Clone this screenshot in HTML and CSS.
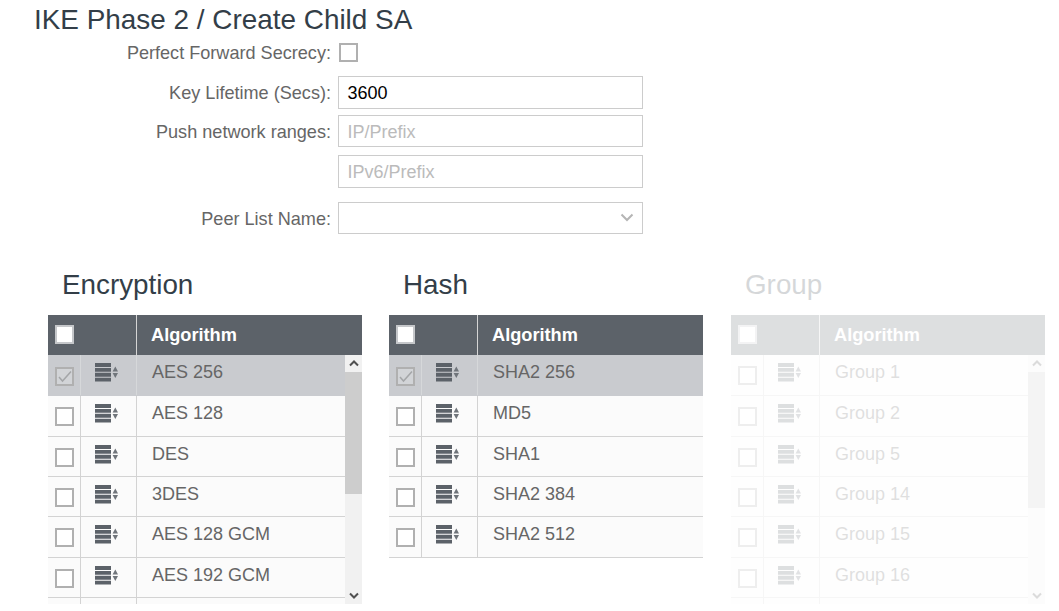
FILE: index.html
```html
<!DOCTYPE html>
<html lang="en">
<head>
    <meta charset="UTF-8">
    <title>IKE Phase 2 / Create Child SA</title>
    <link rel="stylesheet" href="styles.css">
</head>
<body>
    <svg class="defs" width="0" height="0">
        <symbol id="reorder" viewBox="0 0 23 20">
            <path d="M0 0h16v3.900H0zM0 4.900h16v3.900H0zM0 9.800h16v3.900H0zM0 14.700h16v3.900H0z" fill="#5c6269"/>
            <path d="M20.300 3.500l2.700 5h-5.400zM20.300 15l2.700-5h-5.400z" fill="#70757b"/>
        </symbol>
    </svg>

    <h1 class="page-title">IKE Phase 2 / Create Child SA</h1>

    <div class="form">
        <div class="form-row row-pfs">
            <label class="form-label">Perfect Forward Secrecy:</label>
            <span class="check check-form"></span>
        </div>
        <div class="form-row row-lifetime">
            <label class="form-label">Key Lifetime (Secs):</label>
            <div class="field field-value">3600</div>
        </div>
        <div class="form-row row-push">
            <label class="form-label">Push network ranges:</label>
            <div class="field field-empty">IP/Prefix</div>
        </div>
        <div class="form-row row-push6">
            <label class="form-label"></label>
            <div class="field field-empty">IPv6/Prefix</div>
        </div>
        <div class="form-row row-peer">
            <label class="form-label">Peer List Name:</label>
            <div class="field field-select">
                <svg class="caret" width="14" height="9" viewBox="0 0 14 9"><path d="M1.500 1.500L7 7l5.500-5.500" fill="none" stroke="#b5b5b5" stroke-width="2"/></svg>
            </div>
        </div>
    </div>

    <div class="panels">
        <section class="panel">
            <h2 class="panel-title">Encryption</h2>
            <div class="grid">
                <div class="grid-head">
                    <div class="head-select"><span class="check check-head"></span></div>
                    <div class="head-name">Algorithm</div>
                </div>
                <div class="grid-body">
                    <div class="rows">
                        <div class="row selected">
                            <div class="cell-check"><span class="check"><svg width="15" height="15" viewBox="0 0 15 15"><path d="M2 8l3.500 4L14 2.500" fill="none" stroke="#a4a6a8" stroke-width="1.500"/></svg></span></div>
                            <div class="cell-icon"><svg width="23" height="20"><use href="#reorder"/></svg></div>
                            <div class="cell-name">AES 256</div>
                        </div>
                        <div class="row">
                            <div class="cell-check"><span class="check"></span></div>
                            <div class="cell-icon"><svg width="23" height="20"><use href="#reorder"/></svg></div>
                            <div class="cell-name">AES 128</div>
                        </div>
                        <div class="row">
                            <div class="cell-check"><span class="check"></span></div>
                            <div class="cell-icon"><svg width="23" height="20"><use href="#reorder"/></svg></div>
                            <div class="cell-name">DES</div>
                        </div>
                        <div class="row">
                            <div class="cell-check"><span class="check"></span></div>
                            <div class="cell-icon"><svg width="23" height="20"><use href="#reorder"/></svg></div>
                            <div class="cell-name">3DES</div>
                        </div>
                        <div class="row">
                            <div class="cell-check"><span class="check"></span></div>
                            <div class="cell-icon"><svg width="23" height="20"><use href="#reorder"/></svg></div>
                            <div class="cell-name">AES 128 GCM</div>
                        </div>
                        <div class="row">
                            <div class="cell-check"><span class="check"></span></div>
                            <div class="cell-icon"><svg width="23" height="20"><use href="#reorder"/></svg></div>
                            <div class="cell-name">AES 192 GCM</div>
                        </div>
                        <div class="row">
                            <div class="cell-check"></div>
                            <div class="cell-icon"></div>
                            <div class="cell-name"></div>
                        </div>
                    </div>
                    <div class="scrollbar">
                        <div class="scroll-btn"><svg width="10" height="7" viewBox="0 0 10 7"><path d="M1 5.500l4-4 4 4" fill="none" stroke="#505050" stroke-width="2"/></svg></div>
                        <div class="scroll-track"><div class="scroll-thumb thumb-enc"></div></div>
                        <div class="scroll-btn"><svg width="10" height="7" viewBox="0 0 10 7"><path d="M1 1.500l4 4 4-4" fill="none" stroke="#505050" stroke-width="2"/></svg></div>
                    </div>
                </div>
            </div>
        </section>

        <section class="panel">
            <h2 class="panel-title">Hash</h2>
            <div class="grid">
                <div class="grid-head">
                    <div class="head-select"><span class="check check-head"></span></div>
                    <div class="head-name">Algorithm</div>
                </div>
                <div class="grid-body">
                    <div class="rows">
                        <div class="row selected">
                            <div class="cell-check"><span class="check"><svg width="15" height="15" viewBox="0 0 15 15"><path d="M2 8l3.500 4L14 2.500" fill="none" stroke="#a4a6a8" stroke-width="1.500"/></svg></span></div>
                            <div class="cell-icon"><svg width="23" height="20"><use href="#reorder"/></svg></div>
                            <div class="cell-name">SHA2 256</div>
                        </div>
                        <div class="row">
                            <div class="cell-check"><span class="check"></span></div>
                            <div class="cell-icon"><svg width="23" height="20"><use href="#reorder"/></svg></div>
                            <div class="cell-name">MD5</div>
                        </div>
                        <div class="row">
                            <div class="cell-check"><span class="check"></span></div>
                            <div class="cell-icon"><svg width="23" height="20"><use href="#reorder"/></svg></div>
                            <div class="cell-name">SHA1</div>
                        </div>
                        <div class="row">
                            <div class="cell-check"><span class="check"></span></div>
                            <div class="cell-icon"><svg width="23" height="20"><use href="#reorder"/></svg></div>
                            <div class="cell-name">SHA2 384</div>
                        </div>
                        <div class="row">
                            <div class="cell-check"><span class="check"></span></div>
                            <div class="cell-icon"><svg width="23" height="20"><use href="#reorder"/></svg></div>
                            <div class="cell-name">SHA2 512</div>
                        </div>
                    </div>
                </div>
            </div>
        </section>

        <section class="panel panel-disabled">
            <h2 class="panel-title">Group</h2>
            <div class="grid">
                <div class="grid-head">
                    <div class="head-select"><span class="check check-head"></span></div>
                    <div class="head-name">Algorithm</div>
                </div>
                <div class="grid-body">
                    <div class="rows">
                        <div class="row">
                            <div class="cell-check"><span class="check"></span></div>
                            <div class="cell-icon"><svg width="23" height="20"><use href="#reorder"/></svg></div>
                            <div class="cell-name">Group 1</div>
                        </div>
                        <div class="row">
                            <div class="cell-check"><span class="check"></span></div>
                            <div class="cell-icon"><svg width="23" height="20"><use href="#reorder"/></svg></div>
                            <div class="cell-name">Group 2</div>
                        </div>
                        <div class="row">
                            <div class="cell-check"><span class="check"></span></div>
                            <div class="cell-icon"><svg width="23" height="20"><use href="#reorder"/></svg></div>
                            <div class="cell-name">Group 5</div>
                        </div>
                        <div class="row">
                            <div class="cell-check"><span class="check"></span></div>
                            <div class="cell-icon"><svg width="23" height="20"><use href="#reorder"/></svg></div>
                            <div class="cell-name">Group 14</div>
                        </div>
                        <div class="row">
                            <div class="cell-check"><span class="check"></span></div>
                            <div class="cell-icon"><svg width="23" height="20"><use href="#reorder"/></svg></div>
                            <div class="cell-name">Group 15</div>
                        </div>
                        <div class="row">
                            <div class="cell-check"><span class="check"></span></div>
                            <div class="cell-icon"><svg width="23" height="20"><use href="#reorder"/></svg></div>
                            <div class="cell-name">Group 16</div>
                        </div>
                        <div class="row">
                            <div class="cell-check"></div>
                            <div class="cell-icon"></div>
                            <div class="cell-name"></div>
                        </div>
                    </div>
                    <div class="scrollbar">
                        <div class="scroll-btn"><svg width="10" height="7" viewBox="0 0 10 7"><path d="M1 5.500l4-4 4 4" fill="none" stroke="#505050" stroke-width="2"/></svg></div>
                        <div class="scroll-track"><div class="scroll-thumb thumb-group"></div></div>
                        <div class="scroll-btn"><svg width="10" height="7" viewBox="0 0 10 7"><path d="M1 1.500l4 4 4-4" fill="none" stroke="#505050" stroke-width="2"/></svg></div>
                    </div>
                </div>
            </div>
        </section>
    </div>
</body>
</html>
```

FILE: styles.css
```css
html, body {
    margin: 0;
    height: 611px;
    overflow: hidden;
}
body {
    font-family: "Liberation Sans", Arial, sans-serif;
    background: #fff;
    color: #666;
    font-size: 18px;
}
.defs {
    position: absolute;
}
.page-title {
    margin: 0;
    padding: 4px 0 0 34px;
    height: 37px;
    font-size: 27.900px;
    line-height: 32px;
    font-weight: normal;
    color: #333e48;
}
.form-row {
    display: flex;
    align-items: center;
}
.form-label {
    width: 331px;
    text-align: right;
    flex-shrink: 0;
    font-size: 18.100px;
    line-height: 20px;
    padding-top: 2px;
}
.row-pfs {
    height: 24px;
}
.row-pfs .form-label {
    padding-top: 0;
}
.row-lifetime {
    margin-top: 11px;
}
.row-push {
    margin-top: 6px;
}
.row-push6 {
    margin-top: 8px;
}
.row-peer {
    margin-top: 14px;
}
.field {
    box-sizing: border-box;
    width: 305px;
    height: 32.500px;
    margin-left: 7px;
    padding-left: 8.500px;
    border: 1px solid #ccc;
    line-height: 32px;
    background: #fff;
}
.field-value {
    color: #000;
}
.field-empty {
    color: #bbb;
}
.field-select {
    position: relative;
}
.caret {
    position: absolute;
    right: 8px;
    top: 10px;
}
.check {
    box-sizing: border-box;
    display: flex;
    align-items: center;
    justify-content: center;
    width: 19px;
    height: 19px;
    border: 2px solid #b0b0b0;
    background: #fff;
}
.check-form {
    margin: 0 0 1px 8px;
}
.check-head {
    border-color: #c5c7ca;
}
.panels {
    display: flex;
    gap: 27px;
    margin-top: 32px;
    padding-left: 48px;
}
.panel {
    width: 314px;
}
.panel-disabled {
    margin-left: 1px;
    opacity: 0.2;
}
.panel-title {
    margin: 0 0 12px 14px;
    font-size: 27.800px;
    line-height: 37px;
    font-weight: normal;
    color: #333e48;
}
.grid {
    height: 289px;
    overflow: hidden;
}
.grid-head {
    display: flex;
    height: 40px;
    background: #5c6269;
    color: #fff;
    font-weight: bold;
    font-size: 18.200px;
}
.head-select {
    box-sizing: border-box;
    width: 89px;
    padding: 10px 0 0 7px;
    border-right: 1px solid #d5d5d5;
}
.head-name {
    padding-left: 14px;
    line-height: 40px;
}
.grid-body {
    display: flex;
    height: 249px;
}
.rows {
    flex: 1;
    min-width: 0;
    overflow: hidden;
}
.row {
    box-sizing: border-box;
    display: flex;
    height: 40.330px;
    border-bottom: 1px solid #d3d3d3;
    background: #fbfbfb;
}
.row:first-child {
    height: 41.300px;
}
.row.selected {
    background: #c9cbcf;
    border-bottom-color: #c9cbcf;
}
.cell-check {
    box-sizing: border-box;
    width: 33px;
    padding: 11px 0 0 7px;
    border-right: 1px solid #d3d3d3;
}
.cell-icon {
    box-sizing: border-box;
    width: 56px;
    padding: 8px 0 0 14px;
    border-right: 1px solid #d3d3d3;
}
.selected .cell-check,
.selected .cell-icon {
    border-right-color: #d6d8da;
}
.selected .check {
    background: #d2d4d7;
    margin-top: 1px;
}
.cell-name {
    padding-left: 15px;
    line-height: 35px;
}
.scrollbar {
    display: flex;
    flex-direction: column;
    width: 17px;
    background: #f1f1f1;
}
.scroll-btn {
    display: flex;
    align-items: center;
    justify-content: center;
    height: 17px;
}
.scroll-track {
    flex: 1;
}
.scroll-thumb {
    background: #cdcdcd;
}
.thumb-enc {
    height: 122px;
}
.thumb-group {
    height: 136px;
}
```
